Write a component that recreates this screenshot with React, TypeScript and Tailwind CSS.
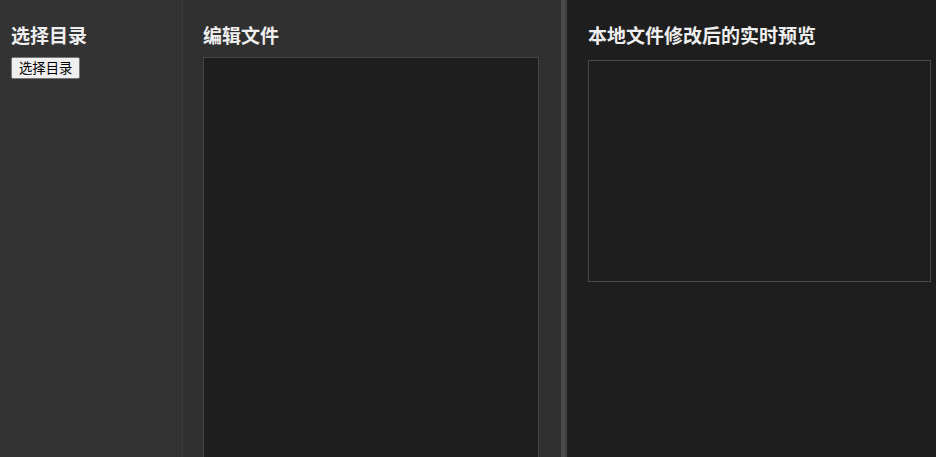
export default function App() {
  const font = { fontFamily: '"Noto Sans CJK SC", "Noto Sans", sans-serif' };

  return (
    <div style={font} className="flex h-[457px] w-full overflow-hidden bg-[#1e1e1e] text-[#eeeeee]">
      {/* 目录 */}
      <aside className="flex w-[183px] shrink-0 flex-col border-r border-[#3d3d3d] bg-[#333333] px-[11px] pt-[21px]">
        <h3 className="h-[28px] text-[19px] font-bold leading-[28px]">选择目录</h3>
        <div className="mt-[8px] flex">
          <button className="flex h-[22px] items-center rounded-[2px] border border-[#767676] bg-[#efefef] px-[7px] text-[13.33px] leading-[18px] text-black">
            选择目录
          </button>
        </div>
      </aside>

      {/* 编辑 */}
      <section className="flex w-[378px] shrink-0 flex-col bg-[#303030] pl-[20px] pr-[22px] pt-[21px]">
        <h3 className="h-[28px] text-[19px] font-bold leading-[28px]">编辑文件</h3>
        <div className="mt-[8px] h-[420px] shrink-0 border border-[#454545] bg-[#1e1e1e]" />
      </section>

      {/* 分隔条 */}
      <div className="flex shrink-0">
        <div className="w-[4px] bg-[#4b4b4b]" />
        <div className="w-px bg-[#3a3a3a]" />
        <div className="w-px bg-[#464646]" />
      </div>

      {/* 预览 */}
      <section className="flex flex-1 flex-col bg-[#1e1e1e] pl-[21px] pr-[5px] pt-[21px]">
        <h3 className="h-[28px] text-[19px] font-bold leading-[28px]">本地文件修改后的实时预览</h3>
        <div className="mt-[11px] h-[222px] border border-[#4a4a4a] bg-[#1e1e1e]" />
      </section>
    </div>
  );
}
